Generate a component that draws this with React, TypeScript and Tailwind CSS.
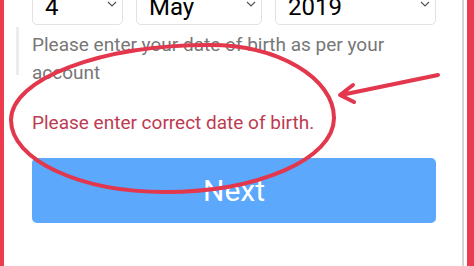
import React from "react";

const Chevron = () => (
  <svg width="10" height="6" viewBox="0 0 10 6" className="mb-[12px] shrink-0">
    <path d="M1 1 L5 5 L9 1" fill="none" stroke="#555" strokeWidth="1.2" />
  </svg>
);

const Select = ({ value, width }: { value: string; width: string }) => (
  <div
    className={`${width} h-[45px] flex items-end justify-between pl-[12px] pr-[5px] pb-[5px] border border-[#e2e2e2] rounded-[5px] bg-white`}
  >
    <span className="text-[24px] leading-none text-black">{value}</span>
    <Chevron />
  </div>
);

export default function App() {
  return (
    <div className="relative w-[474px] h-[266px] overflow-hidden bg-white flex font-['Roboto',sans-serif]">
      <div className="w-[4px] bg-[#ec3a4f]" />
      <div className="flex-1 pl-[28px] pr-[26px]">
        <div className="-mt-[20px] flex gap-[13px]">
          <Select value="4" width="w-[91px]" />
          <Select value="May" width="w-[126px]" />
          <Select value="2019" width="w-[161px]" />
        </div>
        <div className="flex items-start -ml-[16px] mt-[2px]">
          <div className="w-[3px] h-[48px] bg-[#ececec] shrink-0" />
          <p className="ml-[13px] mt-[4px] text-[19px] leading-[28px] text-[#777777]">
            Please enter your date of birth as per your account
          </p>
        </div>
        <p className="mt-[22px] text-[19px] leading-[28px] text-[#bd3b50]">
          Please enter correct date of birth.
        </p>
        <button className="mt-[21px] w-full h-[65px] rounded-[5px] bg-[#5ba8fd] flex items-center justify-center text-white text-[30px] leading-none">
          Next
        </button>
      </div>
      <div className="w-[2px] bg-[#d4d4d4]" />
      <div className="w-[3px] bg-white" />
      <div className="w-[7px] bg-[#ec3a4f]" />

      <svg
        className="absolute inset-0 pointer-events-none"
        width="474"
        height="266"
        viewBox="0 0 474 266"
      >
        <path
          d="M 11 120 C 11 79, 100 45, 210 45 C 278 45, 334 78, 334 118 C 334 159, 258 192, 165 192 C 80 192, 11 160, 11 120 Z"
          fill="none"
          stroke="#e2374c"
          strokeWidth="4"
        />
        <path
          d="M 438 75 L 341 95 M 353 85 L 340 95 L 354 102"
          fill="none"
          stroke="#e2374c"
          strokeWidth="4"
          strokeLinecap="round"
          strokeLinejoin="round"
        />
      </svg>
    </div>
  );
}
